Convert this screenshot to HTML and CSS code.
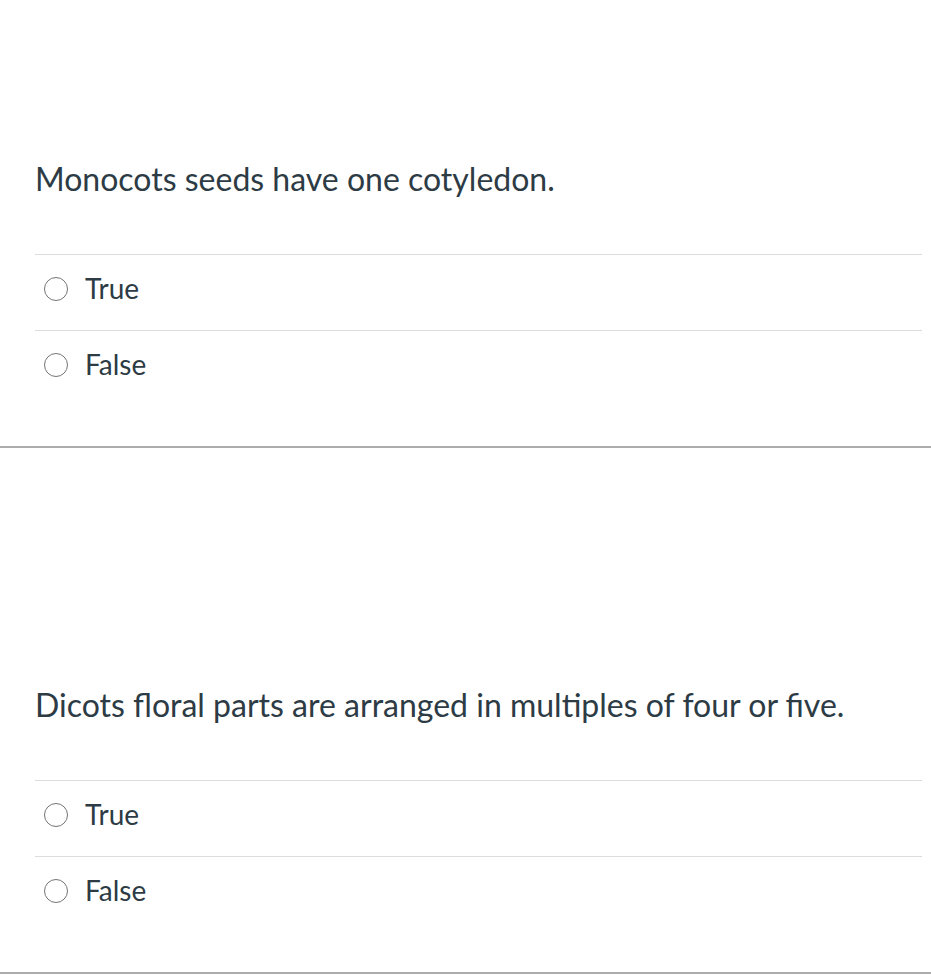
FILE: index.html
```html
<!DOCTYPE html>
<html lang="en">
<head>
<meta charset="utf-8">
<title>Quiz</title>
<link rel="stylesheet" href="styles.css">
</head>
<body>
<div class="quiz">
  <section class="question first">
    <div class="question-text">Monocots seeds have one cotyledon.</div>
    <div class="answers">
      <label class="answer"><span class="radio"></span><span class="answer-label">True</span></label>
      <label class="answer"><span class="radio"></span><span class="answer-label">False</span></label>
    </div>
  </section>
  <section class="question">
    <div class="question-text">Dicots floral parts are arranged in multiples of four or five.</div>
    <div class="answers">
      <label class="answer"><span class="radio"></span><span class="answer-label">True</span></label>
      <label class="answer"><span class="radio"></span><span class="answer-label">False</span></label>
    </div>
  </section>
</div>
</body>
</html>
```
FILE: styles.css
```css
html, body {
  margin: 0;
  padding: 0;
  background: #ffffff;
}
body {
  font-family: Lato, "Liberation Sans", sans-serif;
  color: #2d3b45;
}
.quiz {
  width: 931px;
}
.question {
  padding-top: 237px;
  padding-bottom: 40px;
  border-bottom: 2px solid #acacac;
}
.question.first {
  padding-top: 159px;
}
.question-text {
  margin: 0 0 0 35px;
  font-size: 32px;
  line-height: 40px;
}
.answers {
  margin: 55px 9px 0 35px;
}
.answer {
  display: flex;
  align-items: center;
  height: 75px;
  border-top: 1px solid #dcdcdc;
}
.radio {
  width: 22px;
  height: 22px;
  border: 1.6px solid #737373;
  border-radius: 50%;
  margin-left: 9px;
  margin-right: 17px;
  margin-bottom: 8px;
  flex: none;
}
.answer-label {
  font-size: 28px;
  line-height: 30px;
  margin-bottom: 10px;
}
```
